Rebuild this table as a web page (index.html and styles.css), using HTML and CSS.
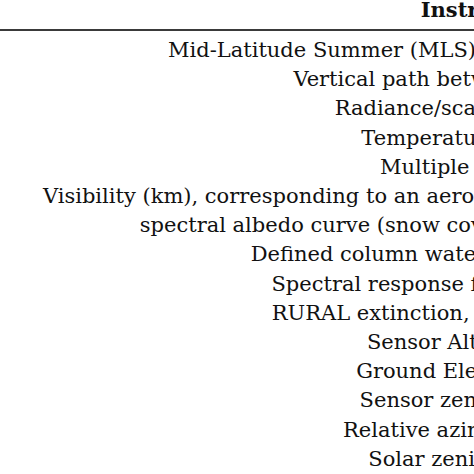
FILE: index.html
```html
<!DOCTYPE html>
<html lang="en">
<head>
<meta charset="utf-8">
<title>Instrument settings</title>
<link rel="stylesheet" href="styles.css">
</head>
<body>
<div class="viewport">
  <table class="settings">
    <thead>
      <tr><th class="head-cell">Instrument</th></tr>
    </thead>
    <tbody>
      <tr><td>Mid-Latitude Summer (MLS) reference atmospheric models</td></tr>
      <tr><td>Vertical path between both altitudes</td></tr>
      <tr><td>Radiance/scattering enabled</td></tr>
      <tr><td>Temperature profile (K)</td></tr>
      <tr><td>Multiple scatterings</td></tr>
      <tr><td>Visibility (km), corresponding to an aerosol optical thickness (AOT) at 550 nm =0.2</td></tr>
      <tr><td>spectral albedo curve (snow cover) from the MODTRAN 6 library</td></tr>
      <tr><td>Defined column water vapor amount (g/cm²)</td></tr>
      <tr><td>Spectral response function of the sensor</td></tr>
      <tr><td>RURAL extinction, visibility = 23.00 km.</td></tr>
      <tr><td>Sensor Altitude h (km)</td></tr>
      <tr><td>Ground Elevation h (km)</td></tr>
      <tr><td>Sensor zenith angles (°)</td></tr>
      <tr><td>Relative azimuth angles (°)</td></tr>
      <tr><td>Solar zenith angles (°)</td></tr>
    </tbody>
  </table>
</div>
</body>
</html>
```
FILE: styles.css
```css
html, body {
  margin: 0;
  padding: 0;
  background: #ffffff;
}

body {
  overflow: hidden;
  width: 474px;
  height: 474px;
}

.viewport {
  width: 474px;
  height: 474px;
  overflow: hidden;
}

.settings {
  width: 975px;
  border-collapse: collapse;
  border-spacing: 0;
  font-family: "DejaVu Serif", "Liberation Serif", serif;
  font-size: 21px;
  color: #111111;
}

.settings th,
.settings td {
  padding: 0;
  text-align: center;
  white-space: nowrap;
}

.head-cell {
  font-weight: bold;
  line-height: 17px;
  padding-top: 1px !important;
  padding-bottom: 11px !important;
  border-bottom: 2px solid #3a3a3a;
}

.settings tbody tr:first-child td {
  padding-top: 5px;
}

.settings td {
  line-height: 29.2px;
  height: 29.2px;
}
```
